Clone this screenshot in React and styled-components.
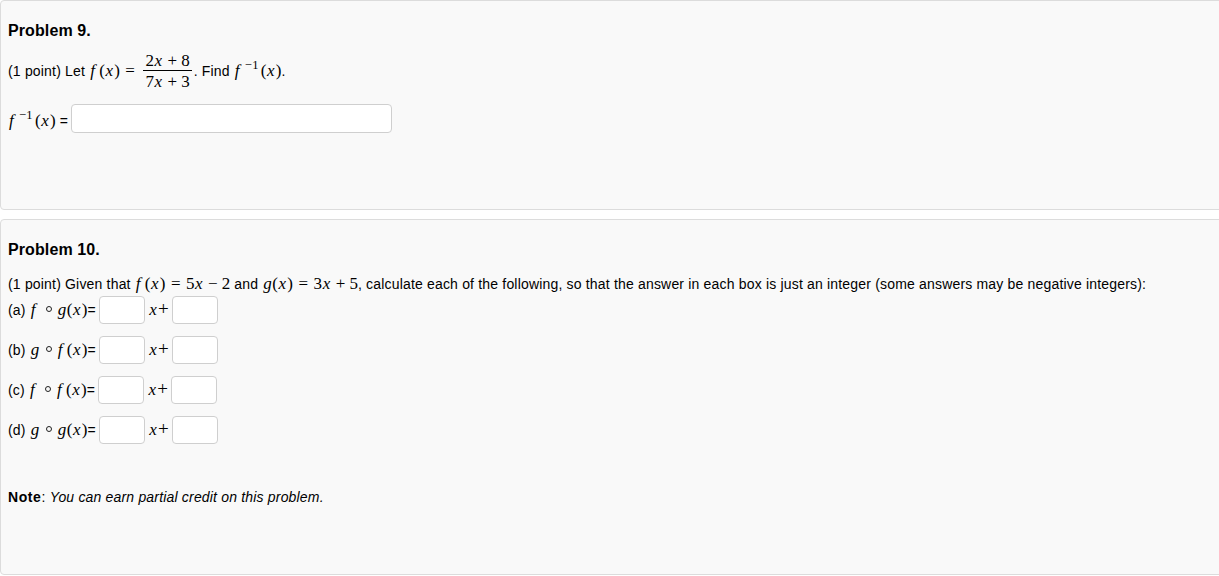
import React from "react";
import styled, { createGlobalStyle, css } from "styled-components";

const Global = createGlobalStyle`
  html, body { margin: 0; padding: 0; background: #fff; overflow: hidden; }
  body {
    font-family: "Liberation Sans", Arial, Helvetica, sans-serif;
    font-size: 14px;
    letter-spacing: 0.18px;
    color: #000;
  }
`;

const mathFont = css`
  font-family: "Liberation Serif", "DejaVu Serif", serif;
  font-size: 17px;
  letter-spacing: 0;
`;

const Page = styled.main`
  display: flex;
  flex-direction: column;
  gap: 9px;
`;

const Panel = styled.section`
  box-sizing: border-box;
  width: calc(100% + 20px);
  height: ${(p) => p.$h}px;
  background: #f9f9f9;
  border: 1px solid #dcdcdc;
  border-radius: 4px;
  padding: 0 7px;
  line-height: 20px;
`;

const Title = styled.h3`
  margin: 20px 0 0;
  font-size: 16px;
  font-weight: bold;
  letter-spacing: 0.1px;
  line-height: 20px;
`;

const Para = styled.p`
  margin: ${(p) => p.$mt}px 0 0;
  line-height: 20px;
  white-space: nowrap;
`;

const Mi = styled.span`
  ${mathFont};
  font-style: italic;
  padding: 0 1.2px 0 0.6px;
`;

const Fn = styled.span`
  ${mathFont};
  font-style: italic;
  display: inline-block;
  width: 10px;
  padding-left: 1px;
  box-sizing: border-box;
`;

const Mn = styled.span`
  ${mathFont};
`;

const Paren = styled.span`
  ${mathFont};
  margin-left: ${(p) => (p.$gap ? 2 : 0)}px;
`;

const Mo = styled.span`
  ${mathFont};
  margin: 0 ${(p) => (p.$rel ? 5.5 : 4.2)}px;
`;

const Ring = styled.span`
  display: inline-block;
  box-sizing: border-box;
  width: 6px;
  height: 6px;
  border: 1px solid #222;
  border-radius: 50%;
  margin: 0 5px 0 6px;
  vertical-align: 3px;
`;

const Sup = styled.span`
  font-family: "Liberation Serif", "DejaVu Serif", serif;
  font-size: 12.5px;
  letter-spacing: 0.3px;
  vertical-align: 7px;
  line-height: 0;
  margin-left: 1px;
`;

const Frac = styled.span`
  display: inline-flex;
  flex-direction: column;
  align-items: stretch;
  vertical-align: 10px;
  padding: 0 1px;
  margin: 0 1px 0 2px;
  text-align: center;
`;

const Num = styled.span`
  line-height: 16px;
  padding: 0 2px 1px;
  border-bottom: 1px solid #000;
`;

const Den = styled.span`
  line-height: 16px;
  padding: 3px 2px 0;
`;

const AnswerRow = styled.div`
  display: flex;
  align-items: center;
  margin-top: ${(p) => p.$mt}px;
`;

const Label = styled.span`
  padding-top: 5px;
  line-height: 20px;
  white-space: nowrap;
`;

const TextInput = styled.input`
  box-sizing: border-box;
  flex: none;
  width: ${(p) => p.$w}px;
  height: ${(p) => p.$h}px;
  margin: 0 0 0 ${(p) => (p.$ml ?? 4)}px;
  padding: 0 6px;
  border: 1px solid #cfcfcf;
  border-radius: 4px;
  background: #fff;
  font: inherit;
  outline: none;
`;

const CompList = styled.div`
  display: flex;
  flex-direction: column;
  gap: 12px;
  margin-top: 2px;
`;

const CompRow = styled.div`
  display: flex;
  align-items: center;
  height: 28px;
`;

const CompLabel = styled.span`
  flex: 0 0 85px;
  line-height: 20px;
  padding-bottom: 1px;
  white-space: nowrap;
`;

const Plus = styled.span`
  flex: none;
  margin: 0 3px 0 4px;
  padding-bottom: 1px;
  line-height: 20px;
`;

const PlusSign = styled.span`
  ${mathFont};
  font-size: 19px;
`;

const Strong = styled.b`
  font-weight: bold;
  letter-spacing: 0.6px;
`;

const Em = styled.i`
  font-style: italic;
`;

const FnX = ({ name }) => (
  <>
    <Fn>{name}</Fn>
    <Mn>(</Mn>
    <Mi>x</Mi>
    <Mn>)</Mn>
  </>
);

const Inverse = () => (
  <>
    <Fn>f</Fn>
    <Sup>−1</Sup>
    <Paren $gap>(</Paren>
    <Mi>x</Mi>
    <Mn>)</Mn>
  </>
);

const comps = [
  ["a", "f", "g"],
  ["b", "g", "f"],
  ["c", "f", "f"],
  ["d", "g", "g"],
];

export default function App() {
  return (
    <>
      <Global />
      <Page>
        <Panel $h={210}>
          <Title>Problem 9.</Title>
          <Para $mt={12}>
            (1 point) Let <FnX name="f" />
            <Mo $rel>=</Mo>
            <Frac>
              <Num>
                <Mn>2</Mn>
                <Mi>x</Mi>
                <Mo>+</Mo>
                <Mn>8</Mn>
              </Num>
              <Den>
                <Mn>7</Mn>
                <Mi>x</Mi>
                <Mo>+</Mo>
                <Mn>3</Mn>
              </Den>
            </Frac>
            . Find <Inverse />.
          </Para>
          <AnswerRow $mt={14}>
            <Label>
              <Inverse /> =
            </Label>
            <TextInput $w={321} $h={29} $ml={3} aria-label="f inverse" />
          </AnswerRow>
        </Panel>

        <Panel $h={356}>
          <Title>Problem 10.</Title>
          <Para $mt={14}>
            (1 point) Given that <FnX name="f" />
            <Mo $rel>=</Mo>
            <Mn>5</Mn>
            <Mi>x</Mi>
            <Mo>−</Mo>
            <Mn>2</Mn> and <FnX name="g" />
            <Mo $rel>=</Mo>
            <Mn>3</Mn>
            <Mi>x</Mi>
            <Mo>+</Mo>
            <Mn>5</Mn>, calculate each of the following, so that the answer in
            each box is just an integer (some answers may be negative
            integers):
          </Para>
          <CompList>
            {comps.map(([k, a, b]) => (
              <CompRow key={k}>
                <CompLabel>
                  ({k}) <Fn>{a}</Fn>
                  <Ring />
                  <FnX name={b} />=
                </CompLabel>
                <TextInput $w={46} $h={28} $ml={3} aria-label={`${k} coefficient`} />
                <Plus>
                  <Mi>x</Mi>
                  <PlusSign>+</PlusSign>
                </Plus>
                <TextInput $w={46} $h={28} $ml={0} aria-label={`${k} constant`} />
              </CompRow>
            ))}
          </CompList>
          <Para $mt={43}>
            <Strong>Note</Strong>: <Em>You can earn partial credit on this problem.</Em>
          </Para>
        </Panel>
      </Page>
    </>
  );
}
